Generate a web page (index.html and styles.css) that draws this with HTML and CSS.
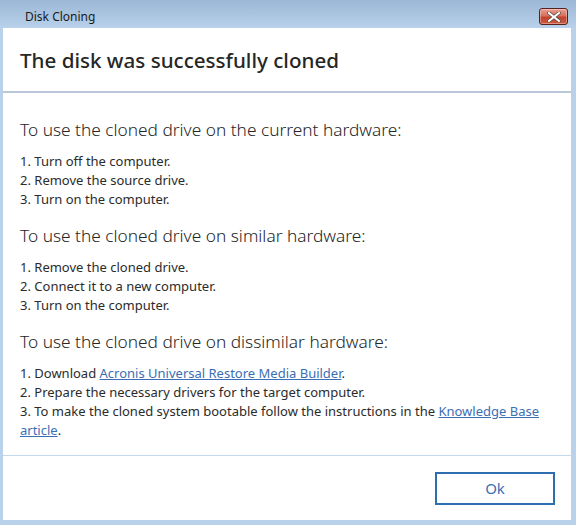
FILE: index.html
```html
<!DOCTYPE html>
<html>
<head>
<meta charset="utf-8">
<link rel="stylesheet" href="styles.css">
</head>
<body>
<div class="window">
  <div class="titlebar">
    <span class="title">Disk Cloning</span>
    <button class="close" aria-label="Close">
      <svg width="14" height="10" viewBox="0 0 14 10"><path d="M2 1 L12 9 M12 1 L2 9" stroke="#4a4a4a" stroke-width="3.4" stroke-linecap="square"/><path d="M2 1 L12 9 M12 1 L2 9" stroke="#fff" stroke-width="2" stroke-linecap="square"/></svg>
    </button>
  </div>
  <div class="client">
    <div class="header">
      <h1>The disk was successfully cloned</h1>
    </div>
    <div class="content">
      <section class="block">
        <h2>To use the cloned drive on the current hardware:</h2>
        <p>1. Turn off the computer.</p>
        <p>2. Remove the source drive.</p>
        <p>3. Turn on the computer.</p>
      </section>
      <section class="block">
        <h2>To use the cloned drive on similar hardware:</h2>
        <p>1. Remove the cloned drive.</p>
        <p>2. Connect it to a new computer.</p>
        <p>3. Turn on the computer.</p>
      </section>
      <section class="block">
        <h2>To use the cloned drive on dissimilar hardware:</h2>
        <p>1. Download <a href="#">Acronis Universal Restore Media Builder</a>.</p>
        <p>2. Prepare the necessary drivers for the target computer.</p>
        <p>3. To make the cloned system bootable follow the instructions in the <a href="#">Knowledge Base article</a>.</p>
      </section>
    </div>
    <div class="footer">
      <button class="ok">Ok</button>
    </div>
  </div>
</div>
</body>
</html>
```
FILE: styles.css
```css
html, body {
  margin: 0;
  padding: 0;
}
body {
  width: 576px;
  height: 525px;
  overflow: hidden;
  font-family: "Noto Sans", "Open Sans", sans-serif;
  color: #2b2b2b;
}
.window {
  width: 576px;
  height: 525px;
  box-sizing: border-box;
  background: #b9d1ea;
  display: flex;
  flex-direction: column;
  padding: 0 5px 6px 3px;
}
.titlebar {
  height: 28px;
  flex: none;
  display: flex;
  align-items: flex-start;
  justify-content: space-between;
  background: linear-gradient(#9bb7d6, #b9d1ea);
  margin: 0 -5px 0 -3px;
  padding: 0 8px 0 25px;
}
.title {
  font-size: 12px;
  line-height: 12px;
  margin-top: 11px;
  color: #1a1a1a;
}
.close {
  margin-top: 8px;
  width: 29px;
  height: 17px;
  border: 1px solid #5a2020;
  border-radius: 3px;
  background: linear-gradient(#e8a091 0%, #d7705c 45%, #c2432c 55%, #cc5a40 100%);
  padding: 0;
  display: flex;
  align-items: center;
  justify-content: center;
  box-shadow: inset 0 0 0 1px rgba(255,255,255,0.35);
}
.client {
  flex: 1;
  background: #fff;
  display: flex;
  flex-direction: column;
}
.header {
  height: 63px;
  border-bottom: 2px solid #b9c7d8;
  display: flex;
  align-items: center;
  padding-left: 17px;
  flex: none;
}
h1 {
  margin: 0;
  font-size: 20.6px;
  font-weight: 500;
  color: #262626;
}
.content {
  flex: 1;
  padding: 25px 17px 0 17px;
  border-bottom: 1px solid #c5d9ee;
}
.block {
  margin-bottom: 15px;
}
h2 {
  margin: 0 0 10px 0;
  font-size: 17.3px;
  font-weight: 300;
  color: #262626;
  line-height: 24px;
}
p {
  margin: 0;
  font-size: 13px;
  line-height: 19px;
  color: #2b2b2b;
}
a {
  color: #3c6eb4;
  text-decoration: underline;
}
.footer {
  height: 64px;
  flex: none;
  display: flex;
  align-items: center;
  justify-content: flex-end;
  padding-right: 16px;
}
.ok {
  width: 120px;
  height: 33px;
  border: 2px solid #2f6db3;
  background: #fff;
  color: #3c6eb4;
  font-family: "Noto Sans", "Open Sans", sans-serif;
  font-size: 15px;
  padding: 0;
}
```
